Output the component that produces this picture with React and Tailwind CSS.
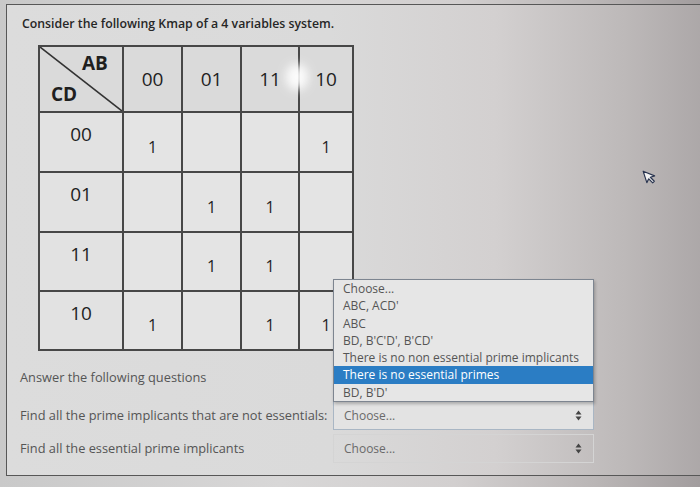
import React from "react";

const COLS = ["00", "01", "11", "10"];
const ROWS = [
  { label: "00", cells: ["1", "", "", "1"] },
  { label: "01", cells: ["", "1", "1", ""] },
  { label: "11", cells: ["", "1", "1", ""] },
  { label: "10", cells: ["1", "", "1", "1"] },
];

const OPTIONS = [
  "Choose...",
  "ABC, ACD'",
  "ABC",
  "BD, B'C'D', B'CD'",
  "There is no non essential prime implicants",
  "There is no essential primes",
  "BD, B'D'",
];

function Arrows() {
  return (
    <svg width="7" height="11" viewBox="0 0 7 11" className="text-[#444]">
      <path d="M3.5 0.5 L6.5 4.5 L0.5 4.5 Z" fill="currentColor" />
      <path d="M3.5 10.5 L6.5 6.5 L0.5 6.5 Z" fill="currentColor" />
    </svg>
  );
}

function Cursor() {
  return (
    <svg width="14" height="16" viewBox="0 0 14 16" className="absolute left-[644px] top-[168px] rotate-[-18deg]">
      <path d="M1 1 L1 13 L4 10 L6.5 15 L8.5 14 L6 9 L10.5 9 Z" fill="#f2f2f2" stroke="#2a3550" strokeWidth="1.2" strokeLinejoin="round" />
    </svg>
  );
}

function KMap() {
  return (
    <div className="ml-[31px] mt-[11px] w-[316px] border-2 border-[#474747] bg-[#474747] grid grid-cols-[82px_57px_57px_56px_52px] grid-rows-[64px_58px_58px_57px_57px] gap-[2px] text-[#1f1f1f]">
      <div className="relative bg-[#dadada] overflow-hidden">
        <svg className="absolute inset-0" width="82" height="64" viewBox="0 0 82 64">
          <line x1="0" y1="0" x2="82" y2="64" stroke="#333" strokeWidth="1.6" />
        </svg>
        <span className="absolute left-[42px] top-[5px] text-[19px] font-bold leading-[22px]">AB</span>
        <span className="absolute left-[11px] top-[36px] text-[19px] font-bold leading-[22px]">CD</span>
      </div>
      {COLS.map((c) => (
        <div key={c} className="bg-[#dadada] flex items-center justify-center text-[19px] leading-[22px]">
          {c}
        </div>
      ))}
      {ROWS.map((r) => (
        <React.Fragment key={r.label}>
          <div className="bg-[#e2e2e2] flex justify-center pt-[10px] text-[19px] leading-[22px]">{r.label}</div>
          {r.cells.map((v, i) => (
            <div key={i} className="bg-[#e4e4e4] flex items-center justify-center pt-[9px] text-[16px]">
              {v}
            </div>
          ))}
        </React.Fragment>
      ))}
    </div>
  );
}

function SelectBox({ faint }) {
  return (
    <div
      className={
        "w-[261px] h-[29px] flex items-center justify-between pl-[10px] pr-[11px] text-[12px] text-[#6a6a6a] " +
        (faint ? "border border-[#d4d4d4]" : "border border-[#a9b6c4] bg-[#e3e3e3]")
      }
    >
      <span>Choose...</span>
      <Arrows />
    </div>
  );
}

export default function App() {
  return (
    <div
      className="relative w-[700px] h-[487px] overflow-hidden pt-[4px] pl-[6px] bg-[linear-gradient(90deg,#c9c9c9_0%,#d8d7d7_40%,#d2cfcf_65%,#bab6b6_85%,#a29d9e_100%)]"
      style={{ fontFamily: '"Open Sans", "Liberation Sans", sans-serif' }}
    >
      <div className="relative h-[472px] w-[720px] border border-[#575757] bg-[linear-gradient(90deg,#dcdcdc_0%,#dadada_45%,#d3d0d0_68%,#bdb9b9_86%,#a7a2a3_100%)]">
        <div className="pt-[9px] pl-[15px] text-[12.3px] leading-[20px] text-[#262626] font-semibold whitespace-nowrap">
          Consider the following Kmap of a 4 variables system.
        </div>
        <KMap />
        <div className="pl-[13px] mt-[17px] text-[12.8px] leading-[18px] text-[#555]">Answer the following questions</div>
        <div className="mt-[15px] flex items-center pl-[13px] text-[12.8px] text-[#555]">
          <span className="w-[313px] whitespace-nowrap">Find all the prime implicants that are not essentials:</span>
          <SelectBox />
        </div>
        <div className="mt-[4px] flex items-center pl-[13px] text-[12.8px] text-[#555]">
          <span className="w-[313px]">Find all the essential prime implicants</span>
          <SelectBox faint />
        </div>

        <div className="absolute left-[326px] top-[274px] w-[261px] border border-[#7d8590] bg-[#e6e6e6] shadow-[1px_2px_3px_rgba(0,0,0,0.25)] text-[12px] text-[#555]">
          {OPTIONS.map((o, i) => (
            <div
              key={o}
              className={
                "h-[17.3px] leading-[17.3px] pl-[9px] whitespace-nowrap " +
                (i === 5 ? "bg-[#2b7dc4] text-white" : "")
              }
            >
              {o}
            </div>
          ))}
        </div>
      </div>
      <div className="absolute left-[286px] top-[64px] w-[22px] h-[26px] rounded-full bg-white blur-[5px] opacity-90" />
      <Cursor />
    </div>
  );
}
